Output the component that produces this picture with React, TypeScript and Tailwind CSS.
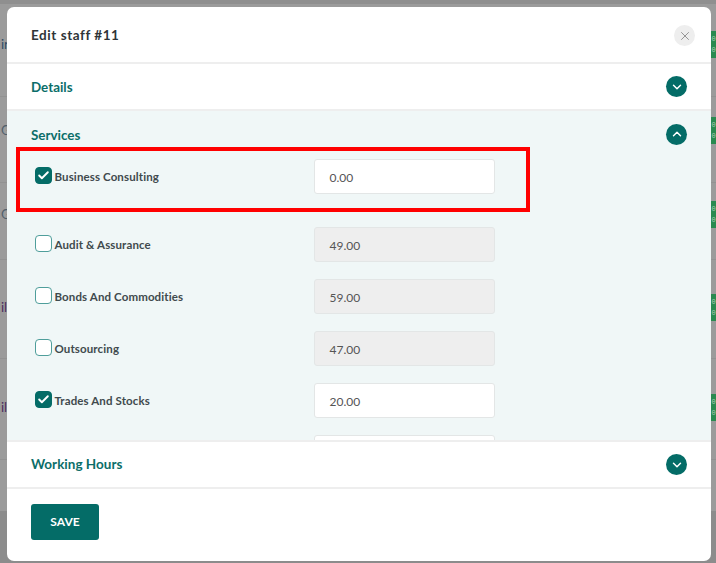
import { Check, ChevronDown, ChevronUp, X } from 'lucide-react';

const services = [
  { name: 'Business Consulting', price: '0.00', checked: true },
  { name: 'Audit & Assurance', price: '49.00', checked: false },
  { name: 'Bonds And Commodities', price: '59.00', checked: false },
  { name: 'Outsourcing', price: '47.00', checked: false },
  { name: 'Trades And Stocks', price: '20.00', checked: true },
];

// table rows of the page behind the backdrop, only their edges show
const pageRows = [
  { label: 'ir', size: 'h-[93px] pt-[27px]', color: 'text-[#2d4a66]' },
  { label: 'G', size: 'h-[86px] pt-[20px]', color: 'text-[#4f5f6b]' },
  { label: 'G', size: 'h-[77px] pt-[18px]', color: 'text-[#4f5f6b]' },
  { label: 'il', size: 'h-[99px] pt-[34px]', color: 'text-[#4a2c5e]' },
  { label: 'il', size: 'h-[101px] pt-[35px]', color: 'text-[#4a2c5e]' },
];

function Toggle({ open }: { open?: boolean }) {
  return (
    <span className="flex h-[21px] w-[21px] items-center justify-center rounded-full bg-[#046c67] text-white">
      {open ? <ChevronUp size={14} strokeWidth={2.5} /> : <ChevronDown size={14} strokeWidth={2.5} />}
    </span>
  );
}

function ServiceRow({ name, price, checked }: { name: string; price: string; checked: boolean }) {
  return (
    <div className="flex h-[35px] shrink-0 items-start">
      <div className="flex w-[283px] items-center pl-[4px] pt-[6px]">
        <span
          className={`flex h-[17px] w-[17px] shrink-0 items-center justify-center rounded-[4px] border-[1.5px] ${
            checked ? 'border-[#046c67] bg-[#046c67]' : 'border-[#4f9e9b] bg-white'
          }`}
        >
          {checked && <Check size={13} strokeWidth={3.5} className="text-white" />}
        </span>
        <span className="ml-[2.5px] pt-[3px] text-[11.5px] font-bold tracking-[0.12px] text-[#3f4a4d]">{name}</span>
      </div>
      <div
        className={`flex h-[35px] w-[181px] items-center rounded-[3px] border border-[#e3e6e6] pl-[14.5px] pt-[2px] text-[12px] text-[#555] ${
          checked ? 'bg-white' : 'bg-[#eeeeee]'
        }`}
      >
        {price}
      </div>
    </div>
  );
}

export default function App() {
  return (
    <div className="relative h-[563px] w-[716px] overflow-hidden bg-[#8c8c8c] font-['Lato','Noto_Sans',sans-serif]">
      {/* page behind the backdrop */}
      <div className="h-[4px] bg-[#8f8f8f]" />
      <div className="flex h-[507px] flex-col bg-[#9b9b9b]">
        {pageRows.map((r, i) => (
          <div key={i} className={`flex shrink-0 items-start justify-between border-b border-[#929292] ${r.size}`}>
            <span className={`pl-[1px] pt-[4px] text-[13px] leading-[18px] ${r.color}`}>{r.label}</span>
            <span className="flex h-[27px] w-[5px] flex-col items-center justify-center bg-[#2a8a50] font-['Liberation_Mono',monospace] text-[7px] leading-[11px] text-[#a9c9b4]">
              <span>0</span>
              <span>0</span>
            </span>
          </div>
        ))}
      </div>

      {/* modal */}
      <div className="absolute left-[7px] top-[7px] flex h-[554px] w-[704px] flex-col overflow-hidden rounded-[7px] bg-white">
        <div className="flex h-[57px] shrink-0 items-center justify-between border-b-2 border-[#eeeeee] pl-[24px] pr-[16px] pt-[2px]">
          <h1 className="text-[13.5px] font-bold tracking-[0.55px] text-[#2f3437]">Edit staff #11</h1>
          <span className="flex h-[21px] w-[21px] items-center justify-center rounded-full bg-[#eeeeee] text-[#888]">
            <X size={14} strokeWidth={1.5} />
          </span>
        </div>

        <div className="flex h-[47px] shrink-0 items-center justify-between border-b-2 border-[#eeeeee] pl-[24px] pr-[24px]">
          <span className="pt-[2px] text-[13.4px] font-bold text-[#0b6e69]">Details</span>
          <Toggle />
        </div>

        <div className="h-[329px] shrink-0 overflow-hidden bg-[#f0f7f7] pl-[24px] pr-[24px]">
          <div className="flex h-[47px] items-center justify-between pb-[1px]">
            <span className="pt-[2px] text-[13.4px] font-bold text-[#0b6e69]">Services</span>
            <Toggle open />
          </div>
          <div className="flex flex-col gap-[17px] pt-[1px]">
            <div className="mb-[16px]">
              <ServiceRow {...services[0]} />
            </div>
            {services.slice(1).map((s) => (
              <ServiceRow key={s.name} {...s} />
            ))}
            {/* next row, only the top of its input is in view */}
            <div className="ml-[283px] h-[35px] w-[181px] shrink-0 rounded-[3px] border border-[#e3e6e6] bg-white" />
          </div>
        </div>

        <div className="flex h-[49px] shrink-0 items-center justify-between border-y-2 border-[#eeeeee] pl-[24px] pr-[24px]">
          <span className="text-[13.5px] font-bold text-[#0b6e69]">Working Hours</span>
          <Toggle />
        </div>

        <div className="px-[24px] pt-[15px]">
          <button className="flex h-[36px] w-[68px] items-center justify-center rounded-[3px] bg-[#046c67] text-[12px] font-bold text-white">
            SAVE
          </button>
        </div>
      </div>

      {/* red annotation */}
      <div className="absolute left-[16px] top-[147px] h-[65px] w-[514px] border-[4px] border-[#ff0000]" />
    </div>
  );
}
